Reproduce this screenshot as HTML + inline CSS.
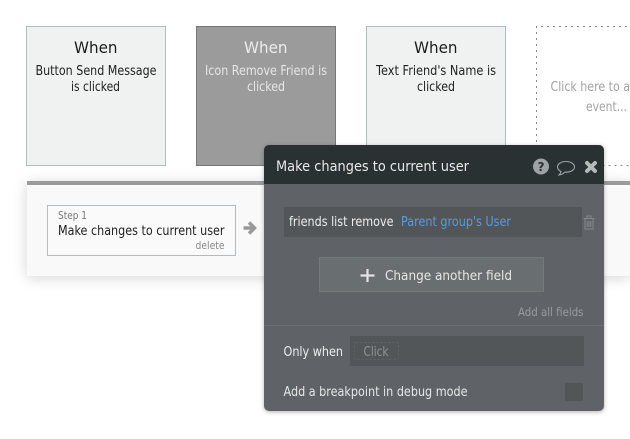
<!DOCTYPE html>
<html><head><meta charset="utf-8"><style>
html,body{margin:0;padding:0;background:#fff;width:630px;height:439px;overflow:hidden}
svg{display:block}
text{font-family:"DejaVu Sans","Liberation Sans",sans-serif;white-space:pre}
</style></head><body>
<svg width="630" height="439" viewBox="0 0 630 439" xmlns="http://www.w3.org/2000/svg">
<defs>
<filter id="s1" x="-10%" y="-30%" width="120%" height="160%"><feDropShadow dx="0" dy="2" stdDeviation="7" flood-color="#000" flood-opacity="0.16"/></filter>
<filter id="s2" x="-10%" y="-10%" width="120%" height="120%"><feDropShadow dx="0" dy="1" stdDeviation="2" flood-color="#000" flood-opacity="0.3"/></filter>
</defs>
<rect x="26.5" y="26.5" width="139" height="139" fill="#f0f2f2" stroke="#b0bec2"/>
<rect x="196.5" y="26.5" width="139" height="139" fill="#9b9b9b" stroke="#777"/>
<rect x="366.5" y="26.5" width="139" height="139" fill="#f0f2f2" stroke="#b0bec2"/>
<path d="M536.5 166V26.5H630M536.5 165.5H630" fill="none" stroke="#8a8a8a" stroke-dasharray="2 4"/>

<g lengthAdjust="spacingAndGlyphs">
<text x="74" y="53" font-size="16" textLength="43.500" lengthAdjust="spacingAndGlyphs" fill="#1c1c1c">When</text>
<text x="35.500" y="75" font-size="13" textLength="121" lengthAdjust="spacingAndGlyphs" fill="#222">Button Send Message</text>
<text x="71" y="91" font-size="13" textLength="49" lengthAdjust="spacingAndGlyphs" fill="#222">is clicked</text>
<text x="244" y="53" font-size="16" textLength="43.500" lengthAdjust="spacingAndGlyphs" fill="#ececec">When</text>
<text x="205" y="75" font-size="13" textLength="122" lengthAdjust="spacingAndGlyphs" fill="#e6e6e6">Icon Remove Friend is</text>
<text x="247" y="91" font-size="13" textLength="38" lengthAdjust="spacingAndGlyphs" fill="#e6e6e6">clicked</text>
<text x="414" y="53" font-size="16" textLength="43.500" lengthAdjust="spacingAndGlyphs" fill="#1c1c1c">When</text>
<text x="376" y="75" font-size="13" textLength="120" lengthAdjust="spacingAndGlyphs" fill="#222">Text Friend's Name is</text>
<text x="417" y="91" font-size="13" textLength="38" lengthAdjust="spacingAndGlyphs" fill="#222">clicked</text>
<text x="550.500" y="91" font-size="13" textLength="79.500" lengthAdjust="spacingAndGlyphs" fill="#a2a2a2">Click here to a</text>
<text x="586" y="111" font-size="13" textLength="41" lengthAdjust="spacingAndGlyphs" fill="#a2a2a2">event...</text>
</g>

<rect x="27" y="181" width="603" height="95" fill="#f9f9f9" filter="url(#s1)"/>
<rect x="27" y="181" width="603" height="4" fill="#9b9b9b"/>
<rect x="47.500" y="205.500" width="188" height="50" fill="#fafafa" stroke="#b0bcc0"/>
<text x="58" y="219" font-size="11" textLength="29" lengthAdjust="spacingAndGlyphs" fill="#777">Step 1</text>
<text x="58" y="235" font-size="13" textLength="166.500" lengthAdjust="spacingAndGlyphs" fill="#222">Make changes to current user</text>
<text x="195.500" y="249" font-size="11" textLength="29" lengthAdjust="spacingAndGlyphs" fill="#888">delete</text>
<path d="M243.500 228h10M249 222.500l5.500 5.500-5.500 5.500" fill="none" stroke="#999" stroke-width="3.500"/>

<rect x="264" y="145" width="340" height="266" rx="5" fill="#5f6468" filter="url(#s2)"/>
<path d="M264 184V150a5 5 0 0 1 5-5h330a5 5 0 0 1 5 5v34z" fill="#2a3133"/>
<text x="276" y="171" font-size="14.500" textLength="193" lengthAdjust="spacingAndGlyphs" fill="#e8e8e8">Make changes to current user</text>
<circle cx="541" cy="166.500" r="8" fill="#9ea3a5"/>
<text x="541" y="171" font-size="12" font-weight="bold" text-anchor="middle" fill="#2a3133">?</text>
<path d="M566 161.500c-5 0-8.500 2.500-8.500 5.500 0 2 1.500 3.500 3.500 4.500-.2 1.500-1 2.500-2 3.500 2.500-.3 4.500-1.300 5.500-2.800h1.500c5 0 8.500-2.500 8.500-5.200 0-3-3.500-5.500-8.500-5.500z" fill="none" stroke="#9ea3a5" stroke-width="1.100"/>
<path d="M587 163l8 8M595 163l-8 8" stroke="#b5b9ba" stroke-width="4" stroke-linecap="round"/>

<rect x="284" y="207" width="298" height="30" fill="#525659"/>
<text x="289" y="226" font-size="13" textLength="104.500" lengthAdjust="spacingAndGlyphs" fill="#eee">friends list remove</text>
<text x="401" y="226" font-size="13" textLength="110" lengthAdjust="spacingAndGlyphs" fill="#5a9bdc">Parent group's User</text>
<path d="M583.500 218.500h11M587 218v-2h4v2M585 218.500v10.500h8v-10.500M587.200 221v6M589 221v6M590.800 221v6" fill="none" stroke="#84898c" stroke-width="1"/>

<rect x="319.500" y="257.500" width="224" height="34" fill="#696e70" stroke="#74797b"/>
<path d="M367.500 269v13M360.500 275.500h14" stroke="#e4e4e4" stroke-width="2.200"/>
<text x="385" y="280" font-size="13.500" textLength="127" lengthAdjust="spacingAndGlyphs" fill="#e6e6e6">Change another field</text>
<text x="518" y="316" font-size="11.500" textLength="65.500" lengthAdjust="spacingAndGlyphs" fill="#989c9e">Add all fields</text>
<rect x="264" y="325" width="340" height="1" fill="#6b7073"/>

<text x="283.500" y="356" font-size="13" textLength="59.500" lengthAdjust="spacingAndGlyphs" fill="#eee">Only when</text>
<rect x="350" y="336" width="234" height="30" fill="#525659"/>
<rect x="354.500" y="342.500" width="44" height="17" rx="2" fill="none" stroke="#5f6467" stroke-dasharray="2 2"/>
<text x="363.500" y="356" font-size="13" textLength="25" lengthAdjust="spacingAndGlyphs" fill="#8e9294">Click</text>
<text x="283.500" y="396" font-size="13" textLength="184" lengthAdjust="spacingAndGlyphs" fill="#e6e6e6">Add a breakpoint in debug mode</text>
<rect x="565" y="383" width="18" height="18" fill="#525659"/>
</svg>
</body></html>
